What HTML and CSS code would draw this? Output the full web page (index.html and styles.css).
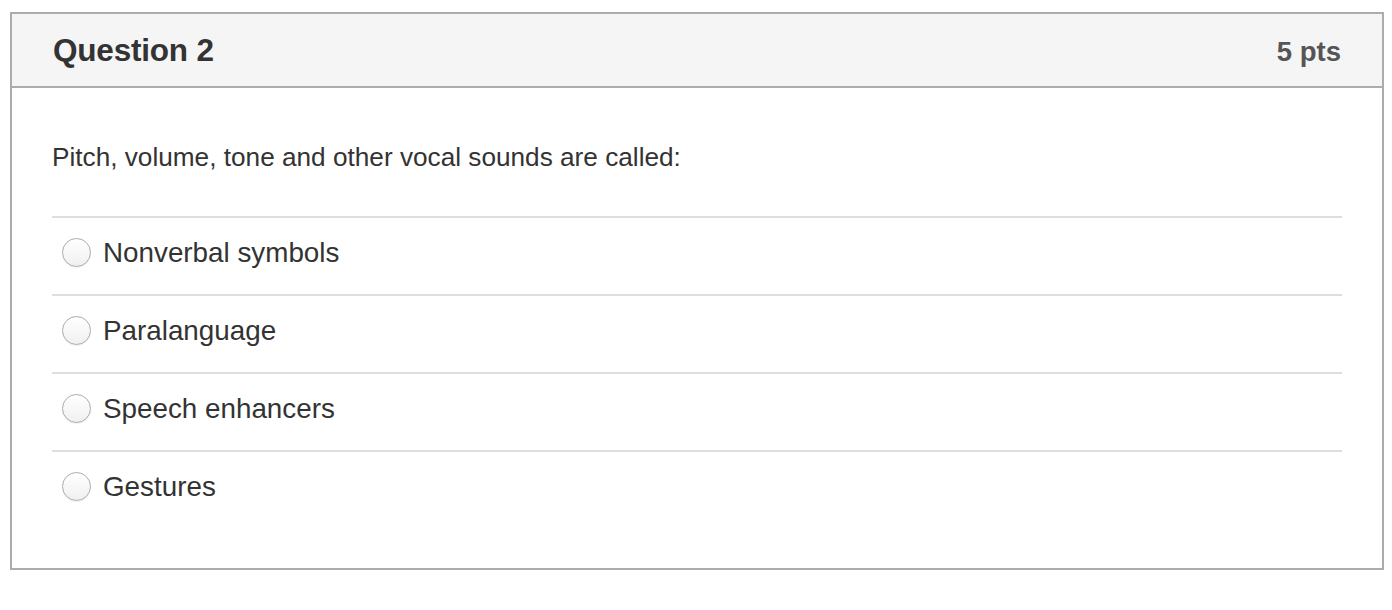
FILE: index.html
```html
<!DOCTYPE html>
<html>
<head>
<meta charset="utf-8">
<link rel="stylesheet" href="styles.css">
</head>
<body>
<div class="question">
  <div class="question-header">
    <h2 class="question-title">Question 2</h2>
    <span class="question-points">5 pts</span>
  </div>
  <div class="question-body">
    <p class="question-text">Pitch, volume, tone and other vocal sounds are called:</p>
    <ul class="answers">
      <li class="answer"><span class="radio"></span><span class="answer-label">Nonverbal symbols</span></li>
      <li class="answer"><span class="radio"></span><span class="answer-label">Paralanguage</span></li>
      <li class="answer"><span class="radio"></span><span class="answer-label">Speech enhancers</span></li>
      <li class="answer"><span class="radio"></span><span class="answer-label">Gestures</span></li>
    </ul>
  </div>
</div>
</body>
</html>
```

FILE: styles.css
```css
html, body {
  margin: 0;
  padding: 0;
  background: #ffffff;
}

body {
  font-family: "Liberation Sans", Arial, Helvetica, sans-serif;
  color: #333333;
  padding: 12px 0 0 10px;
}

.question {
  box-sizing: border-box;
  width: 1374px;
  border: 2px solid #acacac;
  background: #ffffff;
}

.question-header {
  box-sizing: border-box;
  height: 74px;
  background: #f5f5f5;
  border-bottom: 2px solid #acacac;
  padding: 0 41px;
  display: flex;
  align-items: center;
  justify-content: space-between;
}

.question-title {
  margin: 0;
  font-size: 31.5px;
  font-weight: bold;
  color: #333333;
  letter-spacing: -0.2px;
}

.question-points {
  font-size: 27.5px;
  font-weight: bold;
  color: #555555;
  padding-top: 4px;
}

.question-body {
  padding: 54px 40px 40px 40px;
}

.question-text {
  margin: 0 0 43px 0;
  font-size: 26.2px;
  color: #333333;
}

.answers {
  list-style: none;
  margin: 0;
  padding: 0;
}

.answer {
  box-sizing: border-box;
  height: 78px;
  border-top: 2px solid #dedede;
  padding-bottom: 7px;
  display: flex;
  align-items: center;
}

.radio {
  box-sizing: border-box;
  width: 29px;
  height: 29px;
  margin-left: 10px;
  margin-right: 12px;
  border-radius: 50%;
  border: 1px solid #ababab;
  background: linear-gradient(#ffffff, #f0f0f0);
  box-shadow: inset 0 1px 1px rgba(255,255,255,0.9), 0 1px 1px rgba(0,0,0,0.06);
  flex: none;
}

.answer-label {
  font-size: 27.8px;
  color: #333333;
  padding-top: 1px;
}
```
